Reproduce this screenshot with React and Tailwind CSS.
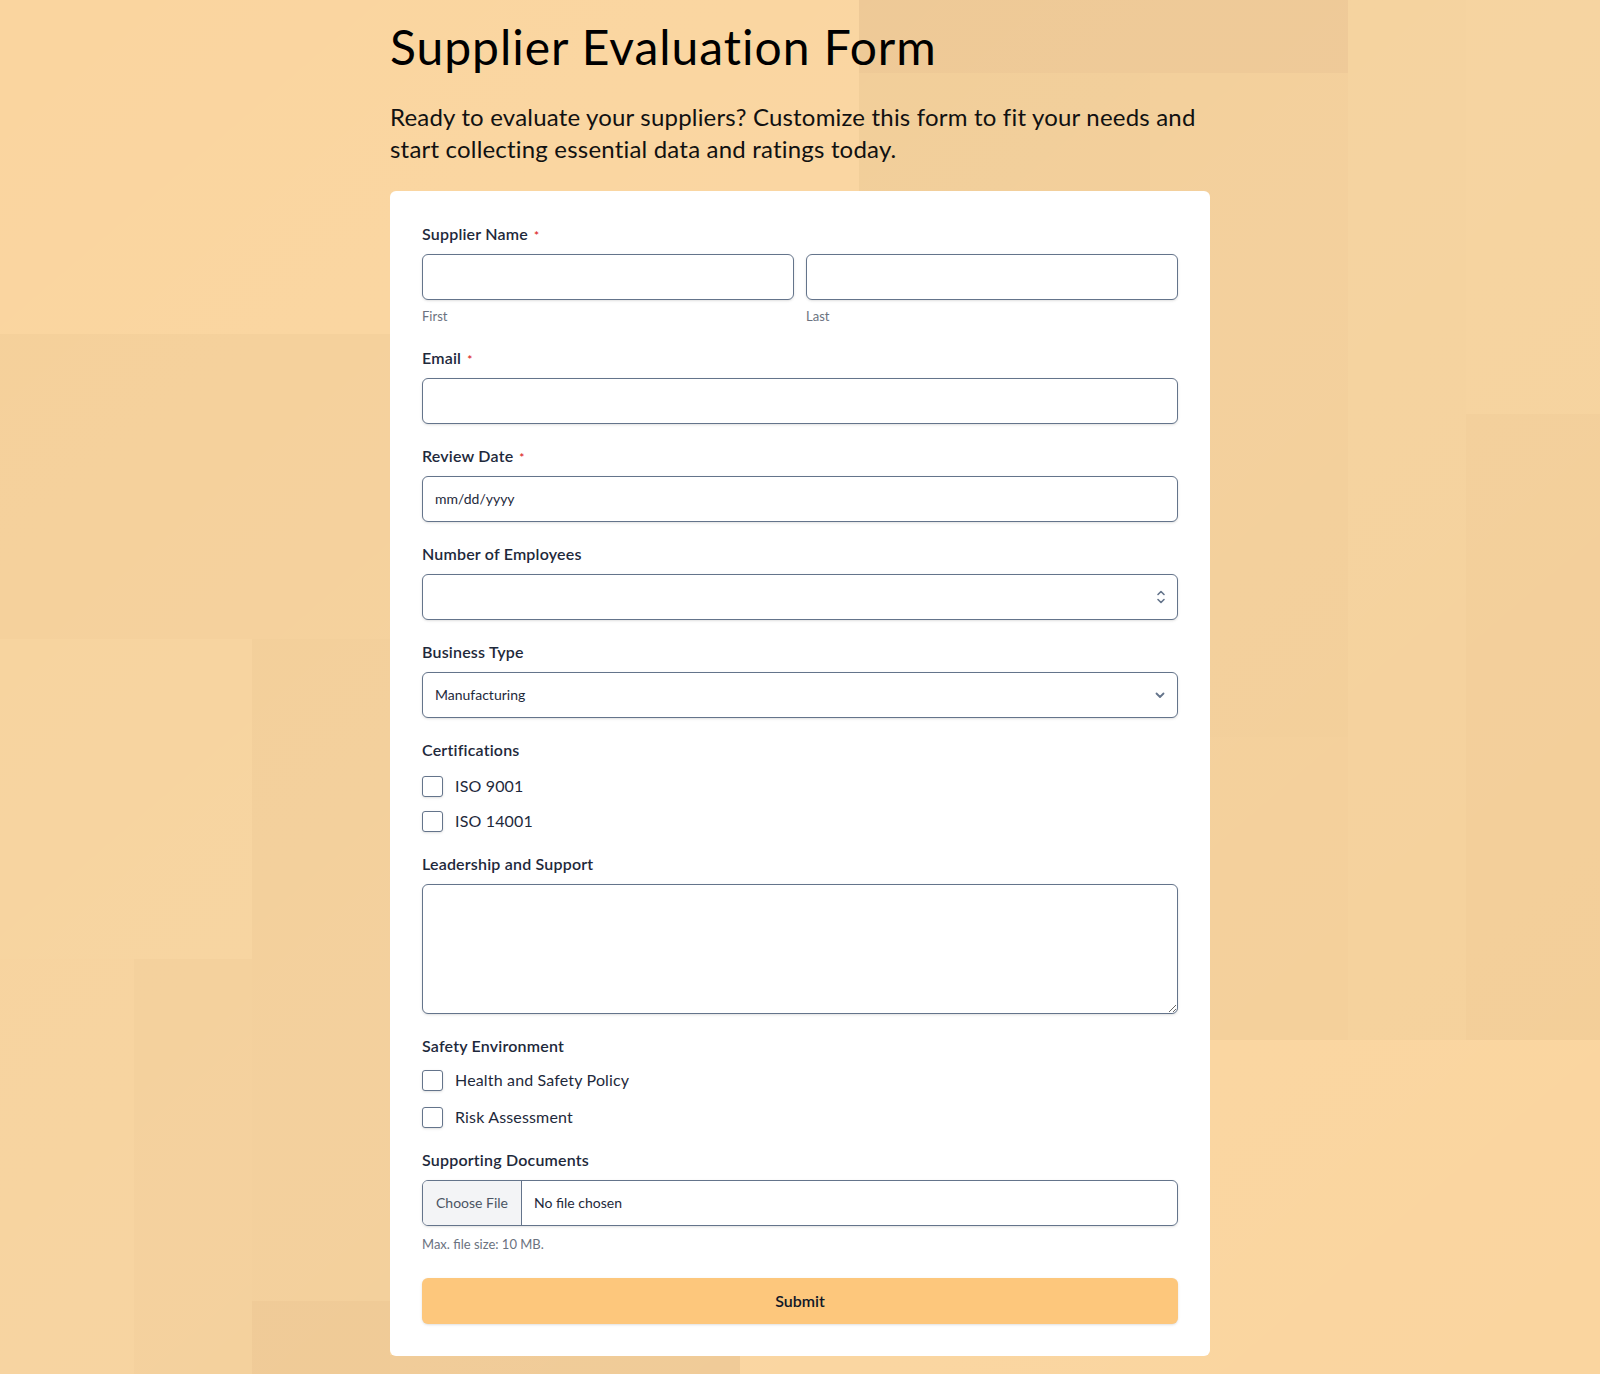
import React from 'react';

const blocks = [
  { k: 'a', cls: 'left-0 top-[334px] w-[390px] h-[305px] bg-[#f5d09a]' },
  { k: 'b', cls: 'left-0 top-[639px] w-[252px] h-[320px] bg-[#f7d39d]' },
  { k: 'c', cls: 'left-[252px] top-[639px] w-[138px] h-[735px] bg-[#f3ce98]' },
  { k: 'd', cls: 'left-0 top-[959px] w-[134px] h-[415px] bg-[#f7d29c]' },
  { k: 'e', cls: 'left-[134px] top-[959px] w-[118px] h-[415px] bg-[#f4cf99]' },
  { k: 'f', cls: 'left-[252px] top-[1301px] w-[138px] h-[73px] bg-[#efc993]' },
  { k: 'g', cls: 'left-[390px] top-[1355px] w-[350px] h-[19px] bg-[#f0ca95]' },
  { k: 'h', cls: 'left-[859px] top-0 w-[489px] h-[737px] bg-[#f2cd97]' },
  { k: 'i', cls: 'left-[859px] top-0 w-[489px] h-[73px] bg-[#eec894]' },
  { k: 'j', cls: 'left-[1150px] top-[73px] w-[198px] h-[664px] bg-[#f3ce98]' },
  { k: 'k', cls: 'left-[1210px] top-[737px] w-[138px] h-[303px] bg-[#f4cf99]' },
  { k: 'l', cls: 'left-[1348px] top-0 w-[118px] h-[1040px] bg-[#f5d19b]' },
  { k: 'm', cls: 'left-[1466px] top-0 w-[134px] h-[414px] bg-[#f6d29c]' },
  { k: 'n', cls: 'left-[1466px] top-[414px] w-[134px] h-[626px] bg-[#f3ce98]' },
];

function Label({ children, required }) {
  return (
    <label className="block text-[16px] leading-6 font-semibold tracking-[0.012em] text-[#1e293b]">
      {children}
      {required && <span className="ml-1.5 text-[12px] leading-none text-[#dc2626]">*</span>}
    </label>
  );
}

const inputCls =
  'block h-[46px] w-full rounded-md border border-[#64748b] bg-white px-3 text-[14px] text-[#1e293b] shadow-sm outline-none';

function Check({ label }) {
  return (
    <label className="flex h-[21px] items-center gap-3 text-[16px] tracking-[0.01em] text-[#1e293b]">
      <input type="checkbox" className="h-[21px] w-[21px] appearance-none rounded-[3px] border border-[#64748b] bg-white shadow-sm" />
      <span>{label}</span>
    </label>
  );
}

export default function App() {
  return (
    <div className="relative min-h-[1374px] overflow-hidden bg-[#fad59f] font-['Lato',sans-serif]">
      {/* background blocks */}
      <div className="absolute inset-0">
        {blocks.map((b) => (
          <div key={b.k} className={`absolute ${b.cls}`} />
        ))}
        <div className="absolute inset-0 bg-gradient-to-br from-white/0 via-white/5 to-black/0" />
      </div>

      <div className="relative mx-auto w-[820px] pt-[18px]">
        <h1 className="text-[48px] leading-[1.2] font-normal tracking-[0.02em] text-black">Supplier Evaluation Form</h1>
        <p className="mt-[25px] text-[24px] leading-8 tracking-[0.008em] text-[#111]">
          Ready to evaluate your suppliers? Customize this form to fit your needs and start collecting essential data and ratings today.
        </p>

        <form className="mt-[26px] rounded-md bg-white px-8 pt-[31px] pb-8">
          {/* Supplier name */}
          <div className="mb-5">
            <Label required>Supplier Name</Label>
            <div className="mt-2 grid grid-cols-2 gap-3">
              <div>
                <input className={inputCls} />
                <div className="mt-1.5 text-[13px] leading-5 text-[#6b7280]">First</div>
              </div>
              <div>
                <input className={inputCls} />
                <div className="mt-1.5 text-[13px] leading-5 text-[#6b7280]">Last</div>
              </div>
            </div>
          </div>

          <div className="mb-5">
            <Label required>Email</Label>
            <input type="email" className={`mt-2 ${inputCls}`} />
          </div>

          <div className="mb-5">
            <Label required>Review Date</Label>
            <input className={`mt-2 ${inputCls}`} defaultValue="mm/dd/yyyy" />
          </div>

          <div className="mb-5">
            <Label>Number of Employees</Label>
            <div className="relative mt-2">
              <input className={inputCls} />
              <svg className="absolute right-[12px] top-[15px] h-4 w-[10px] text-[#64748b]" viewBox="0 0 10 16" fill="none" stroke="currentColor" strokeWidth="1.6" strokeLinecap="round" strokeLinejoin="round">
                <path d="M2 5.5l3-3 3 3" />
                <path d="M2 10.5l3 3 3-3" />
              </svg>
            </div>
          </div>

          <div className="mb-5">
            <Label>Business Type</Label>
            <div className="relative mt-2">
              <select className={`${inputCls} appearance-none`} defaultValue="Manufacturing">
                <option>Manufacturing</option>
                <option>Distribution</option>
                <option>Services</option>
              </select>
              <svg className="pointer-events-none absolute right-[12px] top-[17px] h-3 w-3 text-[#64748b]" viewBox="0 0 12 12" fill="none" stroke="currentColor" strokeWidth="1.8" strokeLinecap="round" strokeLinejoin="round">
                <path d="M2.5 4.5L6 8l3.5-3.5" />
              </svg>
            </div>
          </div>

          <div className="mb-5">
            <Label>Certifications</Label>
            <div className="mt-[14px] flex flex-col gap-[14px]">
              <Check label="ISO 9001" />
              <Check label="ISO 14001" />
            </div>
          </div>

          <div className="mb-5">
            <Label>Leadership and Support</Label>
            <textarea className="mt-2 block h-[130px] w-full rounded-md border border-[#64748b] bg-white px-3 py-2 text-[14px] shadow-sm outline-none" />
          </div>

          <div className="mb-5">
            <Label>Safety Environment</Label>
            <div className="mt-3 flex flex-col gap-4">
              <Check label="Health and Safety Policy" />
              <Check label="Risk Assessment" />
            </div>
          </div>

          <div>
            <Label>Supporting Documents</Label>
            <div className="mt-2 flex h-[46px] overflow-hidden rounded-md border border-[#64748b] shadow-sm">
              <div className="flex w-[99px] items-center justify-center border-r border-[#64748b] bg-[#f3f4f6] text-[14px] text-[#4b5563]">
                Choose File
              </div>
              <div className="flex items-center pl-3 text-[14px] text-[#1e293b]">No file chosen</div>
            </div>
            <div className="mt-2 text-[13px] leading-5 text-[#6b7280]">Max. file size: 10 MB.</div>
          </div>

          <button type="button" className="mt-6 block h-[46px] w-full rounded-md bg-[#fdc77c] text-[16px] font-semibold text-[#111827] shadow-sm">
            Submit
          </button>
        </form>
      </div>
    </div>
  );
}
